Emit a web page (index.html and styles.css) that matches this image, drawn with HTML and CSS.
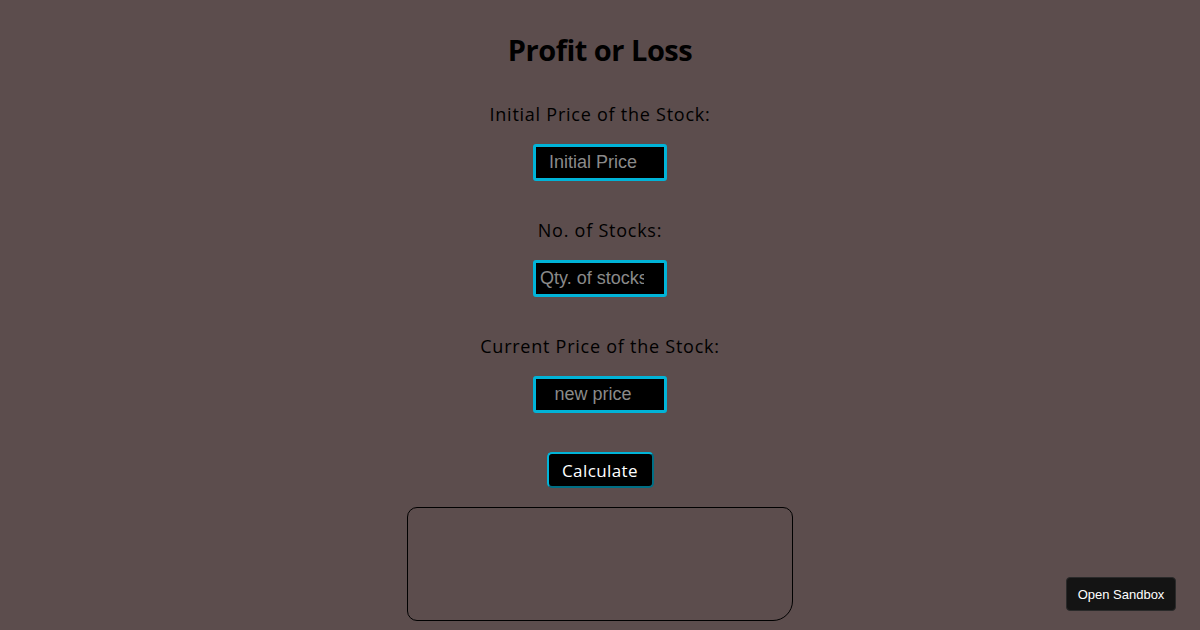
FILE: index.html
```html
<!DOCTYPE html>
<html>
<head>
<meta charset="utf-8">
<link rel="stylesheet" href="styles.css">
</head>
<body>
<main class="app">
  <h1 class="title">Profit or Loss</h1>
  <div class="field">
    <label class="label" for="ip">Initial Price of the Stock:</label>
    <input class="input" id="ip" type="text" placeholder="Initial Price">
  </div>
  <div class="field">
    <label class="label" for="qty">No. of Stocks:</label>
    <input class="input input-left" id="qty" type="text" placeholder="Qty. of stocks">
  </div>
  <div class="field">
    <label class="label" for="np">Current Price of the Stock:</label>
    <input class="input" id="np" type="text" placeholder="new price">
  </div>
  <button class="btn">Calculate</button>
  <div class="output"></div>
</main>
<button class="sandbox">Open Sandbox</button>
</body>
</html>
```
FILE: styles.css
```css
html, body {
  margin: 0;
  padding: 0;
  height: 100%;
  background: #5c4d4d;
  overflow: hidden;
}
body {
  font-family: "Open Sans", "Liberation Sans", sans-serif;
  color: #000;
}
.app {
  display: flex;
  flex-direction: column;
  align-items: center;
}
.title {
  margin: 30px 0 0;
  font-size: 29px;
  line-height: 40px;
  font-weight: 700;
  letter-spacing: -0.5px;
}
.field {
  display: flex;
  flex-direction: column;
  align-items: center;
  gap: 18px;
  margin-top: 32px;
}
.field + .field {
  margin-top: 37px;
}
.label {
  font-size: 18px;
  line-height: 24px;
  letter-spacing: 0.75px;
}
.input {
  box-sizing: border-box;
  width: 134px;
  height: 37px;
  border: 3px solid #00b4d8;
  border-radius: 3px;
  background: #000;
  color: #fff;
  font-family: "Liberation Sans", Arial, sans-serif;
  font-size: 18px;
  padding: 0 19px 0 5px;
  text-align: center;
  outline: none;
}
.input-left {
  text-align: left;
  padding-left: 4px;
  padding-right: 20px;
}
.input::placeholder {
  color: #8a8a8a;
}
.btn {
  box-sizing: border-box;
  margin-top: 39px;
  height: 36px;
  width: 107px;
  background: #000;
  color: #fff;
  border: 2px outset #00b4d8;
  border-radius: 5px;
  font-family: "Open Sans", "Liberation Sans", sans-serif;
  font-size: 17px;
  letter-spacing: 0.4px;
  padding: 0;
}
.output {
  box-sizing: border-box;
  margin-top: 19px;
  width: 386px;
  height: 114px;
  border: 1px solid #000;
  border-radius: 10px 10px 20px 10px;
}
.sandbox {
  position: fixed;
  right: 24px;
  bottom: 19px;
  width: 110px;
  height: 34px;
  background: #141414;
  color: #fff;
  border: 1px solid #2a2a2a;
  border-radius: 4px;
  font-family: "Liberation Sans", Arial, sans-serif;
  font-size: 13px;
  padding: 0;
}
```
